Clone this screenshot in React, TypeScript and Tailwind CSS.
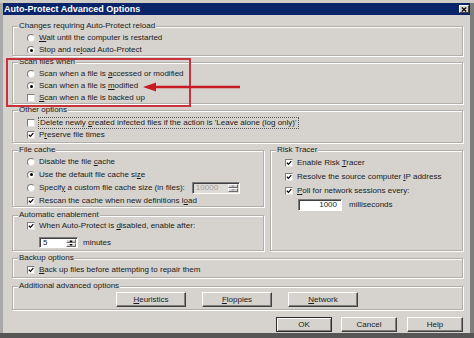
import React from "react";

function Group({
  title,
  className,
  children,
}: {
  title: string;
  className?: string;
  children?: React.ReactNode;
}) {
  return (
    <div
      className={`border border-[#b1aea7] shadow-[inset_1px_1px_0_#fff,1px_1px_0_#fff] ${className ?? ""}`}
    >
      <div className="-mt-[6px] ml-[5px] w-fit bg-[#d6d3ce] px-px leading-[10px] whitespace-nowrap">
        {title}
      </div>
      {children}
    </div>
  );
}

function Radio({ checked }: { checked?: boolean }) {
  return (
    <span className="flex h-[8px] w-[8px] shrink-0 items-center justify-center rounded-full border border-[#7c7c7c] border-r-[#e4e2de] border-b-[#e4e2de] bg-white">
      {checked && <span className="h-[3px] w-[3px] rounded-full bg-black" />}
    </span>
  );
}

function Check({ checked }: { checked?: boolean }) {
  return (
    <span className="flex h-[8px] w-[8px] shrink-0 items-center justify-center border border-[#7c7c7c] border-r-[#e4e2de] border-b-[#e4e2de] bg-white">
      {checked && (
        <svg viewBox="0 0 7 7" className="h-[6px] w-[6px]">
          <path d="M1 3.2 L2.8 5.2 L6.2 1.2" stroke="#000" strokeWidth="1.4" fill="none" />
        </svg>
      )}
    </span>
  );
}

function Row({
  control,
  children,
  className,
}: {
  control: React.ReactNode;
  children: React.ReactNode;
  className?: string;
}) {
  return (
    <div className={`flex items-center gap-[4px] pl-[14px] ${className ?? ""}`}>
      {control}
      <span className="whitespace-nowrap">{children}</span>
    </div>
  );
}

function Arrows({ color }: { color: string }) {
  return (
    <div className="my-px mr-px flex w-[10px] flex-col">
      <div className="flex flex-1 items-center justify-center border border-t-white border-l-white border-r-[#6a6a6a] border-b-[#6a6a6a] bg-[#d6d3ce]">
        <svg viewBox="0 0 5 3" className="h-[2px] w-[4px]">
          <path d="M0 3 L2.5 0 L5 3 Z" fill={color} />
        </svg>
      </div>
      <div className="flex flex-1 items-center justify-center border border-t-white border-l-white border-r-[#6a6a6a] border-b-[#6a6a6a] bg-[#d6d3ce]">
        <svg viewBox="0 0 5 3" className="h-[2px] w-[4px]">
          <path d="M0 0 L2.5 3 L5 0 Z" fill={color} />
        </svg>
      </div>
    </div>
  );
}

const sunken =
  "border border-[#7c7c7c] border-r-white border-b-white shadow-[inset_1px_1px_0_#404040]";

function Btn({
  children,
  className,
  isDefault,
}: {
  children: React.ReactNode;
  className?: string;
  isDefault?: boolean;
}) {
  return (
    <button
      className={`flex h-[15px] items-center justify-center leading-[10px] ${
        isDefault
          ? "border border-[#2a2a2a] shadow-[inset_1px_1px_0_#fff,inset_-1px_-1px_0_#808080]"
          : "border border-t-white border-l-white border-r-[#404040] border-b-[#404040] shadow-[inset_-1px_-1px_0_#808080]"
      } ${className ?? ""}`}
    >
      {children}
    </button>
  );
}

export default function App() {
  return (
    <div className="flex h-[338px] w-[474px] flex-col overflow-hidden bg-[#585858] font-['Liberation_Sans',Arial,sans-serif] text-[8px] leading-[12px] text-[#1a1a1a]">
      <div className="h-[3px] shrink-0 bg-[#cfccc5]" />
      <div className="flex h-[330px] shrink-0">
        <div className="w-[3px] bg-[#a9a9a9]" />
        <div className="relative flex w-[467px] flex-col bg-[#d6d3ce]">
          {/* title bar */}
          <div className="flex h-[12px] items-center justify-between bg-[#0a246a] pl-[1px] pr-[1px]">
            <span className="text-[9px] font-bold leading-[12px] text-white">
              Auto-Protect Advanced Options
            </span>
            <span className="flex h-[8px] w-[10px] items-center justify-center border border-t-white border-l-white border-r-[#404040] border-b-[#404040] bg-[#d6d3ce]">
              <svg viewBox="0 0 6 5" className="h-[5px] w-[6px]">
                <path d="M0.8 0.5 L5.2 4.5 M5.2 0.5 L0.8 4.5" stroke="#000" strokeWidth="1.2" />
              </svg>
            </span>
          </div>

          <div className="flex flex-col pl-[9px] pr-[7px]">
            <Group title="Changes requiring Auto-Protect reload" className="mt-[11px] h-[30px]">
              <div className="pt-px">
                <Row control={<Radio />} className="h-[12px]">
                  <u>W</u>ait until the computer is restarted
                </Row>
                <Row control={<Radio checked />} className="h-[12px]">
                  Stop and re<u>l</u>oad Auto-Protect
                </Row>
              </div>
            </Group>

            <Group title="Scan files when" className="mt-[6px] h-[42px]">
              <div className="pt-px">
                <Row control={<Radio />} className="h-[12px]">
                  Scan when a file is <u>a</u>ccessed or modified
                </Row>
                <Row control={<Radio checked />} className="h-[12px]">
                  Scan when a file is <u>m</u>odified
                </Row>
                <Row control={<Check />} className="h-[12px]">
                  <u>S</u>can when a file is backed up
                </Row>
              </div>
            </Group>

            <Group title="Other options" className="mt-[6px] h-[33px]">
              <div className="pt-[2px]">
                <div className="flex h-[12px] items-center gap-[3px] pl-[14px]">
                  <Check />
                  <span className="border border-dotted border-[#555] px-px leading-[10px] whitespace-nowrap">
                    Delete newly <u>c</u>reated infected files if the action is 'Leave alone (log only)'
                  </span>
                </div>
                <Row control={<Check checked />} className="h-[12px]">
                  P<u>r</u>eserve file times
                </Row>
              </div>
            </Group>

            <div className="mt-[7px] flex gap-[6px]">
              <div className="flex w-[252px] flex-col">
                <Group title="File cache" className="h-[57px]">
                  <Row control={<Radio />} className="h-[13px]">
                    Disable the file <u>c</u>ache
                  </Row>
                  <Row control={<Radio checked />} className="h-[13px]">
                    Use the default file cache si<u>z</u>e
                  </Row>
                  <div className="flex h-[13px] items-center gap-[4px] pl-[14px]">
                    <Radio />
                    <span className="whitespace-nowrap">
                      Specif<u>y</u> a custom file cache size (in files):
                    </span>
                    <div className={`ml-[3px] flex h-[12px] w-[48px] bg-[#dedbd6] text-[#a3a09a] ${sunken}`}>
                      <span className="flex-1 pl-[3px] leading-[10px]">10000</span>
                      <Arrows color="#a3a09a" />
                    </div>
                  </div>
                  <Row control={<Check checked />} className="h-[13px]">
                    Rescan the cache when new definitions l<u>o</u>ad
                  </Row>
                </Group>

                <Group title="Automatic enablement" className="mt-[8px] h-[36px]">
                  <Row control={<Check checked />} className="h-[12px]">
                    When Auto-Protect is <u>d</u>isabled, enable after:
                  </Row>
                  <div className="mt-[5px] flex h-[11px] items-center gap-[5px] pl-[26px]">
                    <div className={`flex h-[11px] w-[39px] bg-white ${sunken}`}>
                      <span className="flex-1 pl-[3px] leading-[9px]">5</span>
                      <Arrows color="#000" />
                    </div>
                    <span>minutes</span>
                  </div>
                </Group>
              </div>

              <Group title="Risk Tracer" className="h-[101px] flex-1">
                <div className="pt-px">
                  <Row control={<Check checked />} className="h-[14px]">
                    Enable Risk <u>T</u>racer
                  </Row>
                  <Row control={<Check checked />} className="h-[14px]">
                    Resolve the source computer <u>I</u>P address
                  </Row>
                  <Row control={<Check checked />} className="h-[14px]">
                    <u>P</u>oll for network sessions every:
                  </Row>
                  <div className="mt-px flex h-[12px] items-center gap-[7px] pl-[27px]">
                    <div className={`h-[12px] w-[44px] bg-white pr-[4px] text-right leading-[10px] ${sunken}`}>
                      1000
                    </div>
                    <span>milliseconds</span>
                  </div>
                </div>
              </Group>
            </div>

            <Group title="Backup options" className="mt-[7px] h-[20px]">
              <div className="pt-px">
                <Row control={<Check checked />} className="h-[12px]">
                  <u>B</u>ack up files before attempting to repair them
                </Row>
              </div>
            </Group>

            <Group title="Additional advanced options" className="mt-[8px] h-[24px]">
              <div className="flex gap-[16px] pt-px pl-[103px]">
                <Btn className="w-[70px]">
                  <u>H</u>euristics
                </Btn>
                <Btn className="w-[70px]">
                  <u>F</u>loppies
                </Btn>
                <Btn className="w-[70px]">
                  <u>N</u>etwork
                </Btn>
              </div>
            </Group>

            <div className="mt-[7px] flex justify-end">
              <Btn isDefault className="w-[56px]">
                OK
              </Btn>
              <Btn className="ml-[9px] w-[56px]">Cancel</Btn>
              <Btn className="ml-[10px] w-[56px]">Help</Btn>
            </div>
          </div>

          {/* red annotation */}
          <div className="absolute left-[3px] top-[55px] h-[49px] w-[185px] border-2 border-[#c8323a]" />
          <svg className="absolute left-[137px] top-[78px]" width="102" height="12" viewBox="0 0 102 12">
            <path d="M14 6 L100 6" stroke="#c81a22" strokeWidth="2.5" />
            <path d="M3 6 L16 1.5 L16 10.5 Z" fill="#c81a22" />
          </svg>
        </div>
        <div className="w-[4px] bg-[#7d7d7d]" />
      </div>
      <div className="flex-1 bg-[#565656]" />
    </div>
  );
}
